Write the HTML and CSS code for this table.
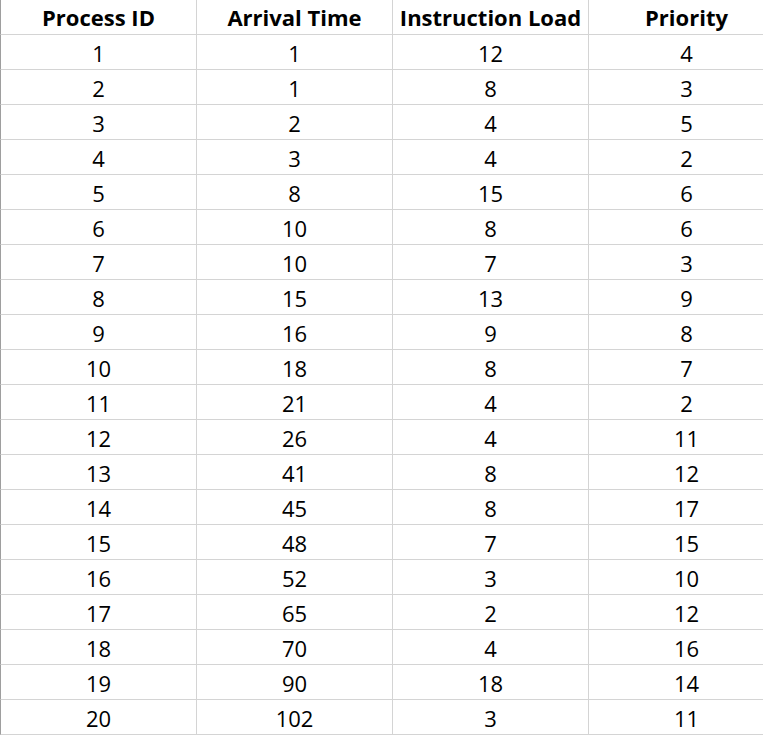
FILE: index.html
```html
<!DOCTYPE html>
<html>
<head>
<meta charset="utf-8">
<link rel="stylesheet" href="styles.css">
</head>
<body>
<div class="sheet">
  <div class="row head"><div class="c">Process ID</div><div class="c">Arrival Time</div><div class="c">Instruction Load</div><div class="c">Priority</div></div>
  <div class="row"><div class="c">1</div><div class="c">1</div><div class="c">12</div><div class="c">4</div></div>
  <div class="row"><div class="c">2</div><div class="c">1</div><div class="c">8</div><div class="c">3</div></div>
  <div class="row"><div class="c">3</div><div class="c">2</div><div class="c">4</div><div class="c">5</div></div>
  <div class="row"><div class="c">4</div><div class="c">3</div><div class="c">4</div><div class="c">2</div></div>
  <div class="row"><div class="c">5</div><div class="c">8</div><div class="c">15</div><div class="c">6</div></div>
  <div class="row"><div class="c">6</div><div class="c">10</div><div class="c">8</div><div class="c">6</div></div>
  <div class="row"><div class="c">7</div><div class="c">10</div><div class="c">7</div><div class="c">3</div></div>
  <div class="row"><div class="c">8</div><div class="c">15</div><div class="c">13</div><div class="c">9</div></div>
  <div class="row"><div class="c">9</div><div class="c">16</div><div class="c">9</div><div class="c">8</div></div>
  <div class="row"><div class="c">10</div><div class="c">18</div><div class="c">8</div><div class="c">7</div></div>
  <div class="row"><div class="c">11</div><div class="c">21</div><div class="c">4</div><div class="c">2</div></div>
  <div class="row"><div class="c">12</div><div class="c">26</div><div class="c">4</div><div class="c">11</div></div>
  <div class="row"><div class="c">13</div><div class="c">41</div><div class="c">8</div><div class="c">12</div></div>
  <div class="row"><div class="c">14</div><div class="c">45</div><div class="c">8</div><div class="c">17</div></div>
  <div class="row"><div class="c">15</div><div class="c">48</div><div class="c">7</div><div class="c">15</div></div>
  <div class="row"><div class="c">16</div><div class="c">52</div><div class="c">3</div><div class="c">10</div></div>
  <div class="row"><div class="c">17</div><div class="c">65</div><div class="c">2</div><div class="c">12</div></div>
  <div class="row"><div class="c">18</div><div class="c">70</div><div class="c">4</div><div class="c">16</div></div>
  <div class="row"><div class="c">19</div><div class="c">90</div><div class="c">18</div><div class="c">14</div></div>
  <div class="row"><div class="c">20</div><div class="c">102</div><div class="c">3</div><div class="c">11</div></div>
</div>
</body>
</html>
```
FILE: styles.css
```css
html, body {
  margin: 0;
  padding: 0;
  background: #ffffff;
  overflow: hidden;
}
.sheet {
  width: 785px;
  font-family: "Open Sans", "Liberation Sans", sans-serif;
  font-size: 22px;
  color: #000000;
}
.row {
  display: grid;
  grid-template-columns: 197px 196px 196px 196px;
}
.c {
  box-sizing: border-box;
  height: 35px;
  padding-top: 2px;
  line-height: 32px;
  text-align: center;
  border-right: 1px solid #d4d4d4;
  border-bottom: 1px solid #d4d4d4;
  white-space: nowrap;
}
.c:first-child {
  border-left: 1px solid #9e9e9e;
}
.head .c {
  font-weight: bold;
  padding-top: 1px;
}
```
